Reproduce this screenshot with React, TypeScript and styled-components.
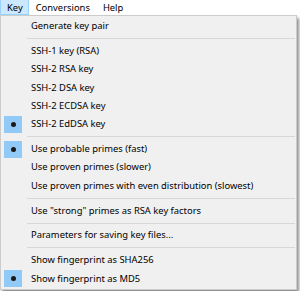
import styled, { createGlobalStyle } from "styled-components";

const GlobalStyle = createGlobalStyle`
    html, body {
        margin: 0;
        padding: 0;
        background: #ffffff;
    }
    body {
        font-family: "Noto Sans", "Open Sans", "Liberation Sans", sans-serif;
        font-size: 9.4px;
        color: #000000;
    }
`;

type Entry = { kind: "item"; label: string; checked?: boolean } | { kind: "sep" };

const entries: Entry[] = [
    { kind: "item", label: "Generate key pair" },
    { kind: "sep" },
    { kind: "item", label: "SSH-1 key (RSA)" },
    { kind: "item", label: "SSH-2 RSA key" },
    { kind: "item", label: "SSH-2 DSA key" },
    { kind: "item", label: "SSH-2 ECDSA key" },
    { kind: "item", label: "SSH-2 EdDSA key", checked: true },
    { kind: "sep" },
    { kind: "item", label: "Use probable primes (fast)", checked: true },
    { kind: "item", label: "Use proven primes (slower)" },
    { kind: "item", label: "Use proven primes with even distribution (slowest)" },
    { kind: "sep" },
    { kind: "item", label: 'Use "strong" primes as RSA key factors' },
    { kind: "sep" },
    { kind: "item", label: "Parameters for saving key files..." },
    { kind: "sep" },
    { kind: "item", label: "Show fingerprint as SHA256" },
    { kind: "item", label: "Show fingerprint as MD5", checked: true },
];

const Window = styled.div`
    width: 300px;
    height: 291px;
    overflow: hidden;
    background: #ffffff;
`;

const MenuBar = styled.div`
    display: flex;
    height: 15px;
    background: #ffffff;
`;

const BarItem = styled.div<{ $open?: boolean }>`
    display: flex;
    align-items: center;
    height: 15px;
    padding: 0 5px 0 6px;
    box-sizing: border-box;
    background: ${({ $open }) => ($open ? "#cce8ff" : "transparent")};
    border: 1px solid ${({ $open }) => ($open ? "#99d1ff" : "transparent")};
    border-top: none;
`;

const Dropdown = styled.div`
    width: 297px;
    box-sizing: border-box;
    background: #f0f0f0;
    border: 1px solid #cccccc;
    padding: 1px 0 1px 1px;
    box-shadow: 2px 3px 3px rgba(0, 0, 0, 0.45);
`;

const Item = styled.div`
    display: flex;
    align-items: center;
    height: 18.33px;
`;

const CheckSlot = styled.div`
    width: 29px;
    height: 100%;
    display: flex;
    align-items: center;
    padding-left: 2px;
    box-sizing: border-box;
`;

const CheckBubble = styled.div`
    width: 18px;
    height: 17px;
    background: #91c9f7;
    display: flex;
    align-items: center;
    justify-content: center;
`;

const Dot = styled.div`
    width: 5px;
    height: 5px;
    border-radius: 50%;
    background: #1a1a1a;
`;

const Label = styled.span`
    white-space: nowrap;
    line-height: 12px;
`;

const Separator = styled.div`
    height: 6.5px;
    display: flex;
    align-items: center;
    padding-left: 25px;
    padding-right: 1px;
`;

const SeparatorLine = styled.div`
    flex: 1;
    height: 1px;
    background: #d7d7d7;
`;

export default function App() {
    return (
        <>
            <GlobalStyle />
            <Window>
                <MenuBar>
                    <BarItem $open>Key</BarItem>
                    <BarItem>Conversions</BarItem>
                    <BarItem>Help</BarItem>
                </MenuBar>
                <Dropdown>
                    {entries.map((e, i) =>
                        e.kind === "sep" ? (
                            <Separator key={i}>
                                <SeparatorLine />
                            </Separator>
                        ) : (
                            <Item key={i}>
                                <CheckSlot>
                                    {e.checked && (
                                        <CheckBubble>
                                            <Dot />
                                        </CheckBubble>
                                    )}
                                </CheckSlot>
                                <Label>{e.label}</Label>
                            </Item>
                        )
                    )}
                </Dropdown>
            </Window>
        </>
    );
}
